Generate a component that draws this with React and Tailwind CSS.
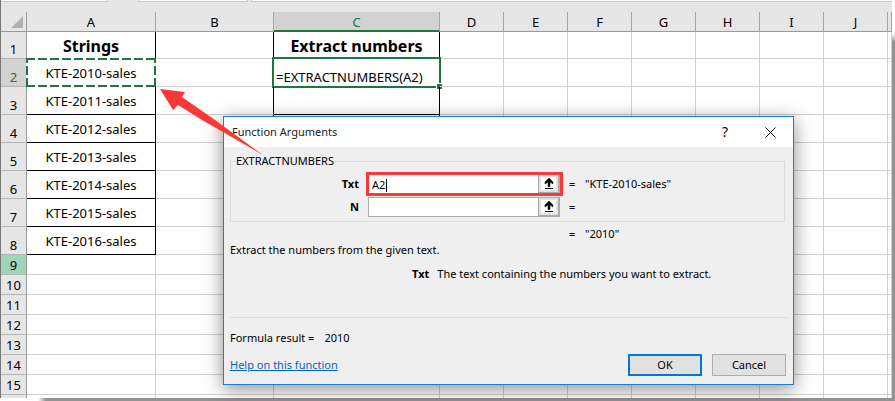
const columns = ['A', 'B', 'C', 'D', 'E', 'F', 'G', 'H', 'I', 'J', ''];

const rows = [
  { n: 1, a: 'Strings', c: 'Extract numbers' },
  { n: 2, a: 'KTE-2010-sales', c: '=EXTRACTNUMBERS(A2)' },
  { n: 3, a: 'KTE-2011-sales' },
  { n: 4, a: 'KTE-2012-sales' },
  { n: 5, a: 'KTE-2013-sales' },
  { n: 6, a: 'KTE-2014-sales' },
  { n: 7, a: 'KTE-2015-sales' },
  { n: 8, a: 'KTE-2016-sales' },
  { n: 9 },
  { n: 10 },
  { n: 11 },
  { n: 12 },
  { n: 13 },
  { n: 14 },
  { n: 15 },
];

function rowHeight(n) {
  if (n === 1) return 'h-[27px]';
  return n <= 8 ? 'h-7' : 'h-5';
}

function cellBorder(n, col) {
  const right = n <= 8 && ['A', 'B', 'C'].includes(col) ? 'border-r-black' : 'border-r-[#d0d0d0]';
  const bottom = n <= 8 && ['A', 'C'].includes(col) ? 'border-b-black' : 'border-b-[#d0d0d0]';
  return `${right} ${bottom}`;
}

function RowHeader({ n }) {
  let tone = 'bg-[#e6e6e6] text-black';
  if (n === 2) tone = 'bg-[#d2d2d2] text-[#217346]';
  if (n === 9) tone = 'bg-[#9fd5b7] text-black';
  return (
    <th scope="row" className={`border-r border-b border-r-[#999] border-b-[#b5b5b5] p-0 align-bottom text-center text-[13px] leading-[18px] font-normal ${tone}`}>
      {n}
    </th>
  );
}

function MarchingAnts() {
  return (
    <svg className="pointer-events-none absolute -top-px -left-px h-[29px] w-[130px]" fill="none" strokeWidth="2" aria-hidden="true">
      <rect x="1" y="1" width="128" height="27" stroke="#fff" />
      <g stroke="#217346">
        <path d="M0 1H130M0 28H130" strokeDasharray="9 3" />
        <path d="M1 0V29M129 0V29" strokeDasharray="9 3" strokeDashoffset="4" />
      </g>
    </svg>
  );
}

function Cell({ row, col }) {
  const base = `relative border-r border-b p-0 ${cellBorder(row.n, col)}`;
  if (row.n === 1 && (col === 'A' || col === 'C')) {
    return <td className={`${base} text-center align-bottom text-[16px] leading-[23px] font-bold`}>{col === 'A' ? row.a : row.c}</td>;
  }
  if (col === 'A') {
    return (
      <td className={`${base} pt-px text-center text-[13px] leading-[18px]`}>
        {row.a}
        {row.n === 2 && <MarchingAnts />}
      </td>
    );
  }
  if (col === 'C' && row.n === 2) {
    return (
      <td className={`${base} pl-0.5 align-bottom text-[13px] leading-[18px]`}>
        {row.c}
        <span className="absolute -inset-0.5 border-2 border-[#217346]" />
        <span className="absolute -right-[3px] -bottom-[3px] h-1.5 w-1.5 border-t border-l border-white bg-[#217346]" />
      </td>
    );
  }
  return <td className={base} />;
}

function Sheet() {
  return (
    <table className="w-full table-fixed border-separate border-spacing-0 font-['Noto_Sans',sans-serif]">
      <colgroup>
        <col className="w-[26px]" />
        <col className="w-[129px]" />
        <col className="w-[118px]" />
        <col className="w-[166px]" />
        <col className="w-16" />
        <col className="w-16" />
        <col className="w-16" />
        <col className="w-16" />
        <col className="w-16" />
        <col className="w-16" />
        <col className="w-16" />
        <col />
      </colgroup>
      <thead>
        <tr className="h-5 bg-[#e6e6e6]">
          <td className="border-r border-b border-[#999] p-0">
            <svg className="ml-2.5 h-3.5 w-3" viewBox="0 0 12 14" aria-hidden="true">
              <path d="M12 1V13H0Z" fill="#b1b1b1" />
            </svg>
          </td>
          {columns.map((c) => (
            <th
              key={c}
              scope="col"
              className={`border-r border-b p-0 pt-px text-center text-[13px] leading-[18px] font-normal ${
                c === 'C' ? 'border-r-[#a5a5a5] border-b-[#217346] bg-[#d2d2d2] text-[#217346] shadow-[inset_0_-1px_#217346]' : 'border-r-[#a5a5a5] border-b-[#999] text-black'
              }`}
            >
              {c}
            </th>
          ))}
        </tr>
      </thead>
      <tbody>
        {rows.map((row) => (
          <tr key={row.n} className={rowHeight(row.n)}>
            <RowHeader n={row.n} />
            {columns.map((c) => (
              <Cell key={c} row={row} col={c} />
            ))}
          </tr>
        ))}
        <tr className="h-[3px]">
          <td className="border-r border-[#999] bg-[#e6e6e6] p-0" />
          {columns.map((c) => (
            <td key={c} className="border-r border-[#d0d0d0] p-0" />
          ))}
        </tr>
      </tbody>
    </table>
  );
}

function PickButton({ label }) {
  return (
    <button type="button" aria-label={label} className="flex h-full w-[22px] items-center justify-center border-r-2 border-b border-l border-[#ababab] bg-[#e1e1e1] p-0.5">
      <span className="flex h-full w-full items-center justify-center bg-white">
        <svg className="h-3 w-2.5 shrink-0" viewBox="0 0 10 12" aria-hidden="true">
          <path d="M5 1L9 5V7L6 5V9.500H4V5L1 7V5Z" fill="#000" stroke="#000" strokeWidth=".5" />
          <path d="M1 11.500H9" stroke="#000" />
        </svg>
      </span>
    </button>
  );
}

function Argument({ id, label, value, result, active }) {
  return (
    <div className="flex h-[23px] items-center">
      <label htmlFor={id} className="w-[128px] text-right font-bold">
        {label}
      </label>
      <div className="relative ml-[9px] flex h-5 w-[192px] border border-r-0 border-[#ababab] bg-white">
        <input id={id} type="text" defaultValue={value} className="min-w-0 flex-1 bg-transparent pt-0.5 pl-[3px] outline-none" />
        <PickButton label={`Select range for ${label}`} />
        {active && (
          <>
            <span className="absolute top-1 left-[17px] h-[13px] w-px bg-black" />
            <span className="pointer-events-none absolute -inset-x-[3px] -inset-y-[3px] border-3 border-[#fb3838]" />
          </>
        )}
      </div>
      <span className="ml-[9px] w-4">=</span>
      <output htmlFor={id}>{result}</output>
    </div>
  );
}

function FunctionDialog() {
  return (
    <section
      role="dialog"
      aria-labelledby="dialog-title"
      className="absolute top-[116px] left-[223px] w-[571px] border border-[#1a7fd4] bg-[#efefef] font-['Noto_Sans',sans-serif] text-[11px] leading-4 text-black shadow-[0_4px_18px_rgba(0,0,0,0.45)]"
    >
      <header className="flex h-[30px] items-center bg-white pl-2">
        <h1 id="dialog-title" className="flex-1 text-[#222]">
          Function Arguments
        </h1>
        <button type="button" aria-label="Help" className="w-[44px] text-[14px]">
          ?
        </button>
        <button type="button" aria-label="Close" className="flex w-[46px] justify-center">
          <svg className="h-[11px] w-[11px]" viewBox="0 0 11 11" stroke="#000" aria-hidden="true">
            <path d="M.5 .5L10.500 10.500M10.500 .5L.5 10.500" />
          </svg>
        </button>
      </header>
      <div className="px-1.5 pt-1.5 pb-2">
        <fieldset className="mr-0.5 h-[69px] border border-[#dcdcdc]">
          <legend className="ml-[5px] leading-4">EXTRACTNUMBERS</legend>
          <div className="pt-[3px]">
            <Argument id="txt" label="Txt" value="A2" result={'"KTE-2010-sales"'} active />
            <Argument id="n" label="N" value="" result="" />
          </div>
        </fieldset>
        <p className="mt-1 flex pl-[339px]">
          <span className="w-4">=</span>"2010"
        </p>
        <p>Extract the numbers from the given text.</p>
        <p className="mt-2 flex gap-2 pl-[182px]">
          <b>Txt</b>
          <span>The text containing the numbers you want to extract.</span>
        </p>
        <hr className="mt-[35px] border-[#dcdcdc]" />
        <p className="mt-3 flex gap-2.5">
          <span>Formula result =</span>
          <span>2010</span>
        </p>
        <div className="mt-2 flex items-center gap-2.5 pr-px">
          <a href="#help" className="flex-1 text-[#0563c1] underline">
            Help on this function
          </a>
          <button type="button" className="h-[22px] w-[74px] border-2 border-[#0078d7] bg-[#e1e1e1] leading-4">
            OK
          </button>
          <button type="button" className="h-[22px] w-[74px] border border-[#adadad] bg-[#e1e1e1] leading-4">
            Cancel
          </button>
        </div>
      </div>
    </section>
  );
}

function Arrow() {
  return (
    <svg className="pointer-events-none absolute top-[85px] left-[155px] h-[75px] w-[115px]" viewBox="155 85 115 75" aria-hidden="true">
      <path d="M160 89L185 92L182 97L215 120L263 155L202 120L178 105L173 110Z" fill="#fb3838" />
    </svg>
  );
}

export default function App() {
  return (
    <main className="relative w-full overflow-hidden bg-white text-black">
      <div className="flex">
        <div className="min-w-0 flex-1 border-l border-[#777]">
          <div className="flex h-3 items-start bg-[#e6e6e6]">
            <div className="h-0.5 w-[107px] border-r border-b border-[#c6c6c6] bg-white" />
            <div className="ml-[30px] h-0.5 w-[110px] border-x border-b border-[#c6c6c6] bg-white" />
            <div className="ml-[3px] h-0.5 flex-1 border-b border-l border-[#c6c6c6] bg-white" />
          </div>
          <Sheet />
        </div>
        <div className="w-[3px] bg-linear-to-b from-white from-[34px] to-[#929292] to-[42px]" />
      </div>
      <div className="h-[3px] bg-linear-to-r from-white from-[38px] to-[#929292] to-[46px]" />
      <FunctionDialog />
      <Arrow />
    </main>
  );
}
